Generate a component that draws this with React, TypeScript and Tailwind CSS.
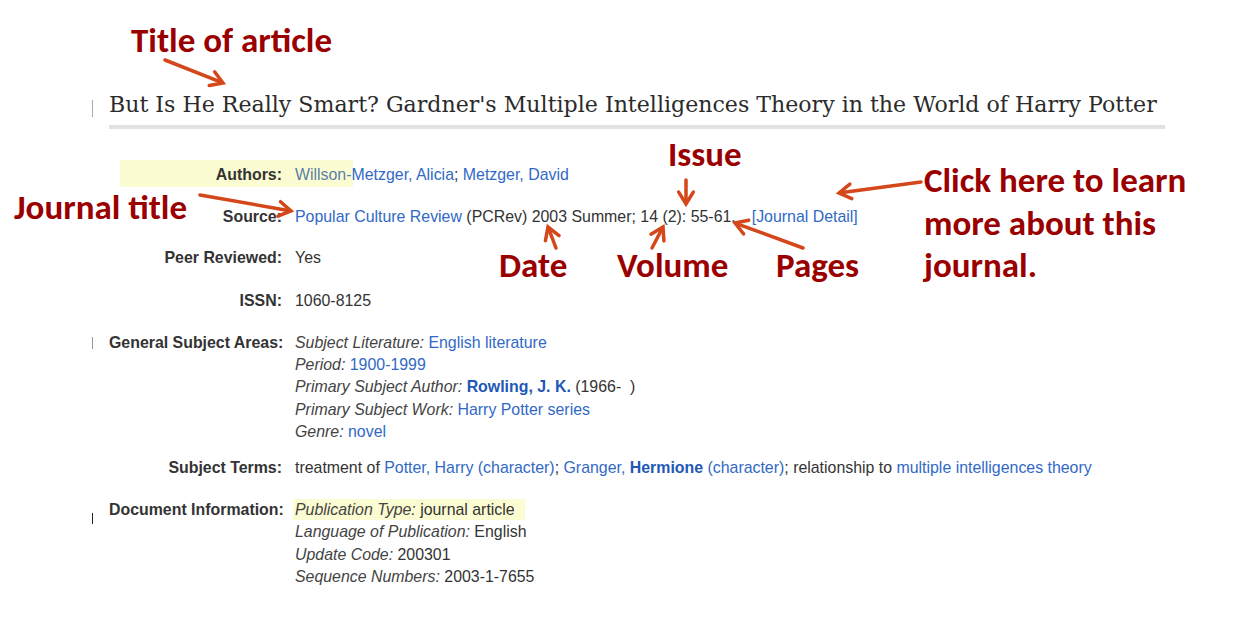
import React from "react";

const ARROW = "#d4471a";

function Arrow({ x1, y1, x2, y2 }: { x1: number; y1: number; x2: number; y2: number }) {
  const a = Math.atan2(y2 - y1, x2 - x1);
  const L = 14;
  const s = 0.55;
  const p1 = [x2 - L * Math.cos(a - s), y2 - L * Math.sin(a - s)];
  const p2 = [x2 - L * Math.cos(a + s), y2 - L * Math.sin(a + s)];
  return (
    <g stroke={ARROW} strokeWidth={3.5} fill="none" strokeLinecap="round" strokeLinejoin="miter">
      <line x1={x1} y1={y1} x2={x2 - 1.5 * Math.cos(a)} y2={y2 - 1.5 * Math.sin(a)} />
      <polyline points={`${p1[0]},${p1[1]} ${x2},${y2} ${p2[0]},${p2[1]}`} />
    </g>
  );
}

function Lk({ children, b }: { children: React.ReactNode; b?: boolean }) {
  return <span className={b ? "text-[#1f58b5] font-bold" : "text-[#3169c6]"}>{children}</span>;
}

function I({ children }: { children: React.ReactNode }) {
  return <i className="text-[#444]">{children}</i>;
}

function Row({ label, children, mt }: { label: string; children: React.ReactNode; mt: string }) {
  return (
    <div className={`grid grid-cols-[173px_1fr] gap-x-[13px] ${mt}`}>
      <div className="text-right font-bold text-[#333] whitespace-nowrap">{label}</div>
      <div className="text-[#333] whitespace-nowrap">{children}</div>
    </div>
  );
}

const ann = "absolute font-[Carlito,Calibri,Lato,sans-serif] font-bold text-[#9a0000] text-[35px] leading-none whitespace-nowrap";

export default function App() {
  return (
    <div className="relative w-[1245px] h-[632px] overflow-hidden bg-white">
      {/* highlights */}
      <div className="absolute left-[120px] top-[160px] w-[233px] h-[27px] bg-[#fcfcd2]" />
      <div className="absolute left-[293px] top-[499px] w-[232px] h-[21px] bg-[#fcfcd2]" />
      {/* stray edge marks */}
      <div className="absolute left-[92px] top-[100px] w-px h-[17px] bg-[#aaa]" />
      <div className="absolute left-[92px] top-[337px] w-px h-[12px] bg-[#999]" />
      <div className="absolute left-[92px] top-[513px] w-px h-[11px] bg-[#222]" />

      <div className="relative pl-[109px] pt-[90px] font-['Liberation_Sans',Arial,sans-serif] text-[15.9px] leading-[22px]">
        <h1 className="font-['DejaVu_Serif',Georgia,serif] text-[22.1px] leading-[28px] text-[#2b2b2b] whitespace-nowrap">
          But Is He Really Smart? Gardner's Multiple Intelligences Theory in the World of Harry Potter
        </h1>
        <div className="mt-[7px] h-[4px] w-[1056px] bg-[#e2e2e2]" />

        <Row label="Authors:" mt="mt-[35px]">
          <span className="text-[#5a7fa8]">Willson-</span>
          <Lk>Metzger, Alicia</Lk>; <Lk>Metzger, David</Lk>
        </Row>
        <Row label="Source:" mt="mt-[20px]">
          <Lk>Popular Culture Review</Lk> (PCRev) 2003 Summer; 14 (2): 55-61.
          <span className="ml-[16px]">
            <Lk>[Journal Detail]</Lk>
          </span>
        </Row>
        <Row label="Peer Reviewed:" mt="mt-[19px]">
          Yes
        </Row>
        <Row label="ISSN:" mt="mt-[21px]">
          1060-8125
        </Row>
        <Row label="General Subject Areas:" mt="mt-[20px]">
          <div className="leading-[22.2px]">
            <div>
              <I>Subject Literature:</I> <Lk>English literature</Lk>
            </div>
            <div>
              <I>Period:</I> <Lk>1900-1999</Lk>
            </div>
            <div>
              <I>Primary Subject Author:</I> <Lk b>Rowling, J. K.</Lk> (1966-&nbsp; )
            </div>
            <div>
              <I>Primary Subject Work:</I> <Lk>Harry Potter series</Lk>
            </div>
            <div>
              <I>Genre:</I> <Lk>novel</Lk>
            </div>
          </div>
        </Row>
        <Row label="Subject Terms:" mt="mt-[14px]">
          treatment of <Lk>Potter, Harry (character)</Lk>; <Lk>Granger, </Lk>
          <Lk b>Hermione</Lk> <Lk>(character)</Lk>; relationship to <Lk>multiple intelligences theory</Lk>
        </Row>
        <Row label="Document Information:" mt="mt-[20px]">
          <div className="leading-[22.4px]">
            <div>
              <I>Publication Type:</I> journal article
            </div>
            <div>
              <I>Language of Publication:</I> English
            </div>
            <div>
              <I>Update Code:</I> 200301
            </div>
            <div>
              <I>Sequence Numbers:</I> 2003-1-7655
            </div>
          </div>
        </Row>
      </div>

      {/* annotations */}
      <div className={`${ann} left-[131px] top-[23px]`}>Title of article</div>
      <div className={`${ann} left-[14px] top-[190px]`}>Journal title</div>
      <div className={`${ann} left-[668px] top-[137px]`}>Issue</div>
      <div className={`${ann} left-[499px] top-[248px]`}>Date</div>
      <div className={`${ann} left-[617px] top-[248px]`}>Volume</div>
      <div className={`${ann} left-[776px] top-[248px]`}>Pages</div>
      <div className={`${ann} left-[924px] top-[159px]`}>
        <div className="leading-[42.5px]">Click here to learn</div>
        <div className="leading-[42.5px]">more about this</div>
        <div className="leading-[42.5px]">journal.</div>
      </div>

      <svg className="absolute left-0 top-0 pointer-events-none" width={1245} height={632}>
        <Arrow x1={165} y1={60} x2={223} y2={83} />
        <Arrow x1={200} y1={195} x2={291} y2={211} />
        <Arrow x1={686} y1={180} x2={686} y2={204} />
        <Arrow x1={556} y1={248} x2={548} y2={227} />
        <Arrow x1={652} y1={248} x2={663} y2={227} />
        <Arrow x1={803} y1={248} x2={735} y2={223} />
        <Arrow x1={921} y1={182} x2={839} y2={193} />
      </svg>
    </div>
  );
}
